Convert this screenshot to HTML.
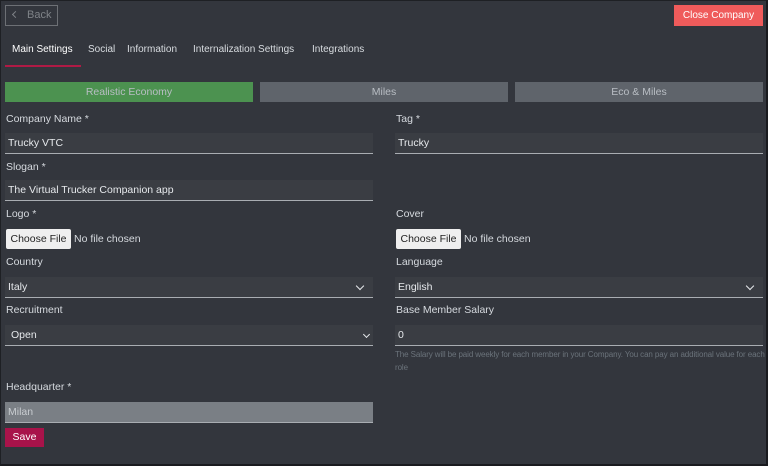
<!DOCTYPE html>
<html><head><meta charset="utf-8"><style>
*{box-sizing:border-box;margin:0;padding:0}
body{width:768px;height:466px;background:#33363d;font-family:"Liberation Sans",sans-serif;position:relative;overflow:hidden;color:#d6dadf;font-size:10.5px}
.a{position:absolute;white-space:nowrap}
.frame{position:absolute;left:0;top:0;width:768px;height:466px;border:1px solid #1e2024;border-right:2px solid #1a1b1f;border-bottom:2px solid #1a1b1f}
.btnb{left:5px;top:5px;width:53px;height:21px;border:1px solid #6d7075;color:#7f8388;font-size:11px;line-height:19px;padding-left:7px}
.close{left:674px;top:5px;width:89px;height:21px;background:#ef5b5b;color:#fff;font-size:10px;line-height:21px;text-align:center}
.tab{top:44px;font-size:10px;color:#d8dce0}
.mode{top:82px;height:20px;line-height:20px;text-align:center;color:#b9bec4;font-size:10.5px}
.lbl{font-size:10.5px;color:#d6dadf}
.inp{height:21px;background:#3a3d43;border-bottom:1px solid #a9adb2;color:#e6e9ec;padding-left:3px;line-height:20px;font-size:10.5px}
.file{height:20px;width:65px;background:#efefef;border-radius:2px;color:#222;font-size:10.5px;line-height:20px;text-align:center}
.chev{position:absolute;right:10px;top:6px;width:6px;height:6px;border-right:1.5px solid #e6e9ec;border-bottom:1.5px solid #e6e9ec;transform:rotate(45deg)}
</style></head><body>
<div class="frame"></div>
<div class="a btnb"><span style="display:inline-block;width:5px;height:5px;border-left:1.5px solid #7f8388;border-bottom:1.5px solid #7f8388;transform:rotate(45deg);margin-right:9px;position:relative;top:-1px"></span>Back</div>
<div class="a close">Close Company</div>
<div class="a tab" style="left:12px;color:#fff">Main Settings</div>
<div class="a tab" style="left:88px">Social</div>
<div class="a tab" style="left:127px">Information</div>
<div class="a tab" style="left:193px">Internalization Settings</div>
<div class="a tab" style="left:312px">Integrations</div>
<div class="a" style="left:5px;top:65px;width:76px;height:2px;background:#b01a45"></div>
<div class="a mode" style="left:5px;width:248px;background:#4c9250">Realistic Economy</div>
<div class="a mode" style="left:260px;width:248px;background:#5f646b">Miles</div>
<div class="a mode" style="left:515px;width:248px;background:#5f646b">Eco &amp; Miles</div>
<div class="a lbl" style="left:6px;top:113px">Company Name *</div>
<div class="a lbl" style="left:396px;top:113px">Tag *</div>
<div class="a inp" style="left:5px;top:133px;width:368px">Trucky VTC</div>
<div class="a inp" style="left:395px;top:133px;width:368px">Trucky</div>
<div class="a lbl" style="left:6px;top:161px">Slogan *</div>
<div class="a inp" style="left:5px;top:180px;width:368px">The Virtual Trucker Companion app</div>
<div class="a lbl" style="left:6px;top:208px">Logo *</div>
<div class="a lbl" style="left:396px;top:208px">Cover</div>
<div class="a file" style="left:6px;top:229px">Choose File</div>
<div class="a" style="left:74px;top:233px">No file chosen</div>
<div class="a file" style="left:396px;top:229px">Choose File</div>
<div class="a" style="left:464px;top:233px">No file chosen</div>
<div class="a lbl" style="left:6px;top:256px">Country</div>
<div class="a lbl" style="left:396px;top:256px">Language</div>
<div class="a inp" style="left:5px;top:277px;width:368px">Italy<span class="chev"></span></div>
<div class="a inp" style="left:395px;top:277px;width:368px">English<span class="chev"></span></div>
<div class="a lbl" style="left:6px;top:304px">Recruitment</div>
<div class="a lbl" style="left:396px;top:304px">Base Member Salary</div>
<div class="a inp" style="left:5px;top:325px;width:368px;padding-left:6px">Open<span class="chev" style="right:4px;width:5px;height:5px;top:7px"></span></div>
<div class="a inp" style="left:395px;top:325px;width:368px">0</div>
<div class="a" style="left:395px;top:349px;font-size:8px;color:#6b737b;line-height:12.5px;white-space:normal;width:372px;letter-spacing:-0.1px">The Salary will be paid weekly for each member in your Company. You can pay an additional value for each role</div>
<div class="a lbl" style="left:6px;top:381px">Headquarter *</div>
<div class="a inp" style="left:5px;top:402px;width:368px;background:#7a7f85;color:#c8ccd0">Milan</div>
<div class="a" style="left:5px;top:428px;width:39px;height:19px;background:#a8134a;color:#fff;text-align:center;line-height:19px;font-size:10.5px">Save</div>
</body></html>
